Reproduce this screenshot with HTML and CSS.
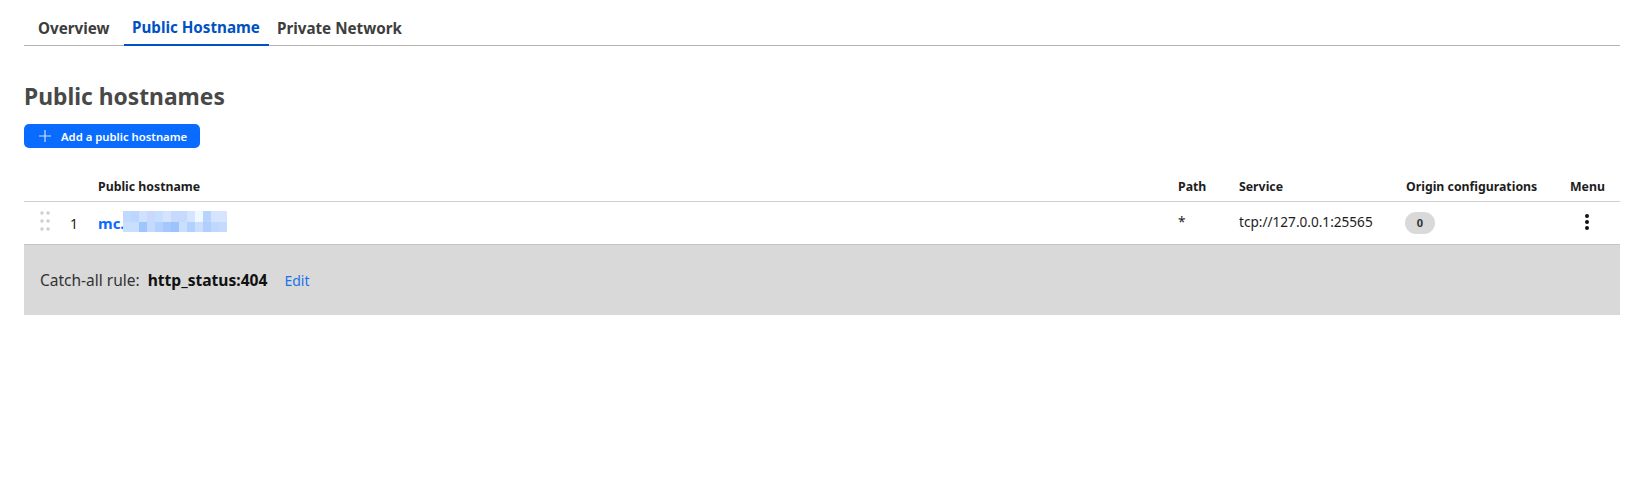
FILE: index.html
```html
<!DOCTYPE html>
<html lang="en">
<head>
  <meta charset="UTF-8" />
  <title>Public Hostname</title>
  <link rel="stylesheet" href="styles.css">
</head>
<body>
  <div class="page">
    <!-- Tabs -->
    <nav class="tabs">
      <a class="tab tab-overview">Overview</a>
      <a class="tab tab-public active">Public Hostname</a>
      <a class="tab tab-private">Private Network</a>
    </nav>

    <h1>Public hostnames</h1>
    <button class="add-btn">
      <svg width="12" height="12" viewBox="0 0 12 12"><path d="M6 0v12M0 6h12" stroke="#cfe2ff" stroke-width="1.2" fill="none"/></svg>
      <span>Add a public hostname</span>
    </button>

    <!-- Table -->
    <div class="row head">
      <div class="c-host">Public hostname</div>
      <div class="c-path">Path</div>
      <div class="c-service">Service</div>
      <div class="c-origin">Origin configurations</div>
      <div class="c-menu">Menu</div>
    </div>
    <div class="row body-row">
      <div class="c-drag">
        <svg width="10" height="20" viewBox="0 0 10 20" fill="#cdcdcd"><circle cx="2" cy="2" r="1.7"/><circle cx="8" cy="2" r="1.7"/><circle cx="2" cy="10" r="1.7"/><circle cx="8" cy="10" r="1.7"/><circle cx="2" cy="18" r="1.7"/><circle cx="8" cy="18" r="1.7"/></svg>
      </div>
      <div class="c-num">1</div>
      <div class="c-host host-cell">
        <a class="host-link">mc.</a>
        <div class="blur" id="blur"></div>
      </div>
      <div class="c-path path-cell">*</div>
      <div class="c-service service-cell">tcp://127.0.0.1:25565</div>
      <div class="c-origin"><span class="pill">0</span></div>
      <div class="c-menu">
        <svg width="6" height="18" viewBox="0 0 6 18" fill="#111"><circle cx="3" cy="3" r="2"/><circle cx="3" cy="9" r="2"/><circle cx="3" cy="15" r="2"/></svg>
      </div>
    </div>

    <div class="catch-all">
      <span>Catch-all rule:</span>
      <strong>http_status:404</strong>
      <a class="edit">Edit</a>
    </div>
  </div>

  <script>
    // Pixelated part of the hostname, two rows of 13 blocks
    const upper = ['#c2d9fe','#bcd6fe','#d0e0ff','#c8d9fd','#c6dffe','#d5e3fe','#c6dafe','#c6dafe','#d5e5fe','#f0f7ff','#b8d3fd','#d5e5fe','#d5e5fe'];
    const lower = ['#c8dffe','#c8dffe','#9fc5fe','#c2dbfe','#b3d1fe','#a3c7fe','#9cc3fe','#c8e0fc','#b3d1fe','#c8dffe','#b0cffe','#c0d7fe','#c5daff'];
    const blur = document.getElementById('blur');
    upper.concat(lower).forEach(color => {
      const cell = document.createElement('i');
      cell.style.background = color;
      blur.appendChild(cell);
    });
  </script>
</body>
</html>
```

FILE: styles.css
```css
:root {
  --blue: #0a6cff;
  --tab-blue: #0051c3;
  --text: #1d1d1d;
  --heading: #484848;
  --line: #cfcfcf;
  --grey: #d9d9d9;
}

body {
  margin: 0;
  background: #fff;
  color: var(--text);
  font-family: "Noto Sans", "Open Sans", sans-serif;
}

.page {
  padding: 0 32px 0 24px;
}

.tabs {
  display: flex;
  height: 45px;
  border-bottom: 1px solid #b3b3b3;
}

.tab {
  display: block;
  box-sizing: border-box;
  font-size: 15.2px;
  font-weight: 700;
  line-height: 20px;
  white-space: nowrap;
  padding: 18px 8px 0;
  color: #3d3d3d;
}

.tab-overview { width: 100px; padding-left: 14px; }

.tab.active {
  color: var(--tab-blue);
  padding: 17px 0 0 8px;
  height: 46px;
  width: 145px;
  border-bottom: 2px solid var(--tab-blue);
}

h1 {
  margin: 35px 0 0;
  font-size: 22.8px;
  line-height: 32px;
  font-weight: 700;
  color: var(--heading);
}

.add-btn {
  display: flex;
  align-items: center;
  gap: 10px;
  width: 176px;
  height: 24px;
  margin-top: 11px;
  padding: 0 0 0 15px;
  border: 0;
  border-radius: 5px;
  background: var(--blue);
  color: #fff;
  font-family: inherit;
  font-size: 11.3px;
  font-weight: 600;
}

.row {
  display: flex;
  align-items: center;
}

.head {
  margin-top: 24px;
  height: 29px;
  align-items: flex-start;
  line-height: 30px;
  border-bottom: 1px solid var(--line);
  font-size: 12.3px;
  font-weight: 700;
  padding-left: 74px;
}

.body-row {
  height: 42px;
  font-size: 13.6px;
}

.c-drag { width: 16px; padding-left: 16px; display: flex; margin-bottom: 4px; }
.c-num { width: 42px; padding-left: 14px; box-sizing: border-box; font-size: 14px; }
.c-host { flex: 1; }
.c-path { width: 61px; }
.c-service { width: 167px; }
.c-origin { width: 164px; }
.c-menu { width: 50px; }

.path-cell { margin-bottom: 4px; }
.service-cell { margin-bottom: 3px; }

.body-row .c-menu {
  display: flex;
  box-sizing: border-box;
  padding-left: 14px;
  margin-bottom: 2px;
}

.host-cell { display: flex; align-items: center; }

.host-link {
  width: 25px;
  color: var(--blue);
  font-size: 15px;
  font-weight: 700;
}

.blur {
  display: grid;
  grid-template-columns: repeat(13, 8px);
  grid-template-rows: 11px 10px;
  margin-bottom: 3px;
}

.pill {
  display: block;
  width: 30px;
  height: 22px;
  margin-left: -1px;
  border-radius: 11px;
  background: var(--grey);
  font-size: 11px;
  font-weight: 700;
  line-height: 22px;
  text-align: center;
  color: #333;
}

.catch-all {
  display: flex;
  align-items: center;
  height: 70px;
  padding-left: 16px;
  background: var(--grey);
  border-top: 1px solid #c4c4c4;
  font-size: 15.5px;
  color: #333;
}

.catch-all strong {
  margin-left: 8px;
  font-size: 15.6px;
  color: #111;
}

.edit {
  margin-left: 17px;
  font-size: 14px;
  color: #1a73e8;
}
```
